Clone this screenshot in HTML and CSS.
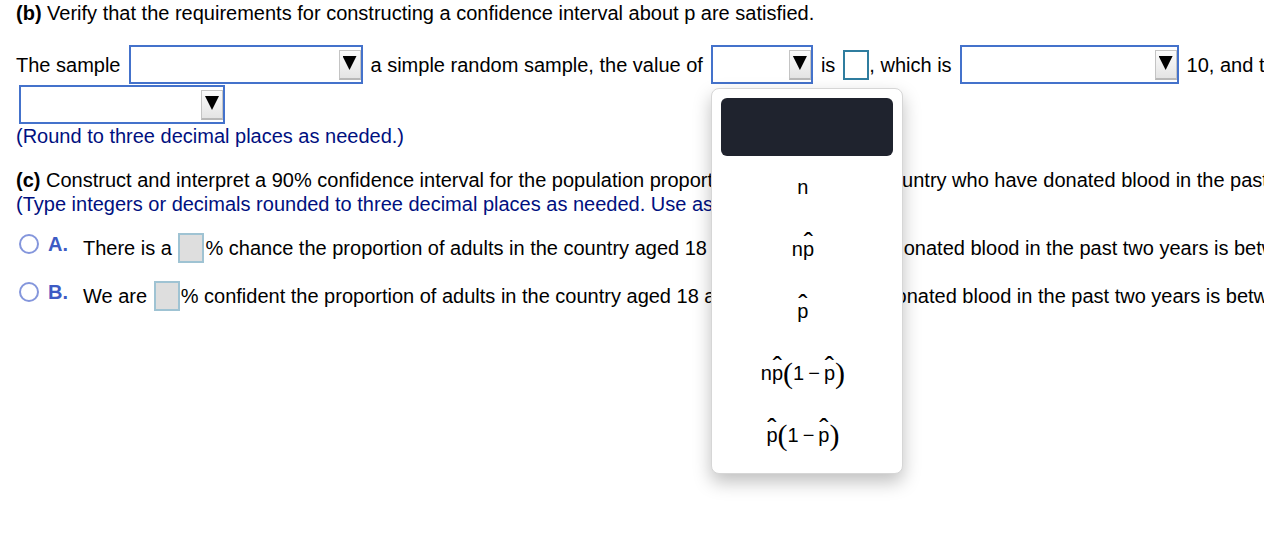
FILE: index.html
```html
<!DOCTYPE html>
<html lang="en">
<head>
    <meta charset="UTF-8">
    <title>Confidence Interval for a Proportion</title>
    <link rel="stylesheet" href="styles.css">
</head>
<body>
    <main class="question">
        <!-- Part (b) -->
        <p class="line"><b>(b)</b> Verify that the requirements for constructing a confidence interval about p are satisfied.</p>

        <div class="answer-rows">
            <div class="row">
                <span>The sample</span>
                <span class="dropdown wide">
                    <select aria-label="The sample"><option></option></select>
                </span>
                <span>a simple random sample, the value of</span>
                <span class="dropdown narrow">
                    <select aria-label="Value of"><option></option></select>
                    <div class="menu" role="listbox" aria-label="Value of">
                        <button class="option selected" role="option" aria-selected="true" aria-label="Blank"></button>
                        <button class="option" role="option">n</button>
                        <button class="option" role="option">n<span class="hat">p</span></button>
                        <button class="option" role="option"><span class="hat">p</span></button>
                        <button class="option" role="option">n<span class="hat">p</span><span class="paren">(</span>1<span class="minus">−</span><span class="hat">p</span><span class="paren">)</span></button>
                        <button class="option" role="option"><span class="hat">p</span><span class="paren">(</span>1<span class="minus">−</span><span class="hat">p</span><span class="paren">)</span></button>
                    </div>
                </span>
                <span>is</span>
                <span class="field"><input class="blank" type="text" aria-label="Computed value">, which is</span>
                <span class="dropdown medium">
                    <select aria-label="Comparison with 10"><option></option></select>
                </span>
                <span>10, and the</span>
            </div>
            <div class="row">
                <span class="dropdown short">
                    <select aria-label="Population size condition"><option></option></select>
                </span>
            </div>
        </div>
        <p class="line hint">(Round to three decimal places as needed.)</p>

        <!-- Part (c) -->
        <div class="part">
            <p class="line"><b>(c)</b> Construct and interpret a 90% confidence interval for the population proportion of adults in the country who have donated blood in the past two years.</p>
            <p class="line hint">(Type integers or decimals rounded to three decimal places as needed. Use ascending order.)</p>
        </div>

        <div class="choices">
            <div class="choice">
                <input type="radio" name="choice" id="choice-a">
                <label for="choice-a">A.</label>
                <span class="field">There is a <input class="blank" type="text" aria-label="Percent chance" disabled>% chance the proportion of adults in the country aged 18 and older who have donated blood in the past two years is between</span>
            </div>
            <div class="choice">
                <input type="radio" name="choice" id="choice-b">
                <label for="choice-b">B.</label>
                <span class="field">We are <input class="blank" type="text" aria-label="Percent confident" disabled>% confident the proportion of adults in the country aged 18 and older who have donated blood in the past two years is between</span>
            </div>
        </div>
    </main>
</body>
</html>
```
FILE: styles.css
```css
*,
*::before,
*::after {
    box-sizing: border-box;
}

body {
    margin: 0;
    background: #fff;
    color: #000;
    font-family: "Liberation Sans", Arial, Helvetica, sans-serif;
    font-size: 20px;
    line-height: 24px;
}

.question {
    min-height: 100vh;
    padding: 1px 0 0 16px;
    overflow: hidden;
    white-space: nowrap;
}

.line {
    margin: 0;
}

.hint {
    color: #00107f;
}

.answer-rows {
    display: flex;
    flex-direction: column;
    gap: 1px;
    margin-top: 20px;
}

.row {
    display: flex;
    align-items: center;
    gap: 8px;
}

/* Dropdowns */
.dropdown {
    position: relative;
    flex: none;
    height: 39px;
}

.dropdown select {
    appearance: none;
    display: block;
    width: 100%;
    height: 100%;
    margin: 0;
    border: 2px solid #4472cb;
    border-radius: 0;
    background: #fff;
    font: inherit;
}

.dropdown::after {
    content: "";
    position: absolute;
    top: 5px;
    right: 2px;
    width: 22px;
    height: 30px;
    border: 1px solid #c4c4c4;
    border-bottom: 2px solid #b8b8b8;
    background: linear-gradient(#fbfbfb, #e4e4e4);
    pointer-events: none;
}

.dropdown::before {
    content: "";
    position: absolute;
    z-index: 1;
    top: 11px;
    right: 6px;
    width: 14px;
    height: 14px;
    background: #000;
    clip-path: polygon(0 0, 100% 0, 50% 100%);
    pointer-events: none;
}

.wide {
    width: 234px;
}

.medium {
    width: 219px;
}

.short {
    width: 206px;
    margin-left: 3px;
}

.narrow {
    width: 102px;
}

/* Open list of expressions */
.menu {
    position: absolute;
    z-index: 2;
    top: 43px;
    left: 0;
    width: 192px;
    padding: 9px 9px 7px;
    border: 1px solid #d6d6d6;
    border-radius: 8px;
    background: #fff;
    box-shadow: 0 8px 18px rgba(0, 0, 0, 0.25);
}

.option {
    display: flex;
    align-items: center;
    justify-content: center;
    width: 100%;
    height: 62px;
    padding: 0 8px 0 0;
    border: 0;
    border-radius: 6px;
    background: none;
    color: #000;
    font: inherit;
}

.option.selected {
    height: 58px;
    background: #1f232e;
}

.hat {
    position: relative;
}

.hat::before {
    content: "ˆ";
    position: absolute;
    top: -6px;
    left: 0;
    width: 100%;
    display: flex;
    justify-content: center;
    font-size: 28px;
}

.paren {
    font-family: "Liberation Serif", "Times New Roman", serif;
    font-size: 30px;
}

.minus {
    margin: 0 4px;
}

/* Answer boxes */
.field {
    display: flex;
    align-items: center;
    white-space: pre;
}

.blank {
    flex: none;
    width: 26px;
    height: 30px;
    padding: 0;
    border: 2px solid #2f7d9f;
    border-radius: 0;
    background: #fff;
    font: inherit;
    text-align: center;
}

.blank:disabled {
    margin: 0 1px;
    border: 2px solid #9fc3d3;
    background: #dedede;
}

/* Part (c) */
.part {
    margin-top: 20px;
}

.choices {
    margin-top: 8px;
}

.choice {
    display: flex;
    align-items: center;
    height: 48px;
}

.choice input[type="radio"] {
    appearance: none;
    flex: none;
    width: 20px;
    height: 20px;
    margin: 0 9px 8px 3px;
    border: 2px solid #8496dc;
    border-radius: 50%;
    background: #fff;
}

.choice input[type="radio"]:checked {
    background: radial-gradient(#3d5bc4 40%, #fff 45%);
}

.choice label {
    flex: none;
    width: 35px;
    margin-bottom: 8px;
    color: #3d5bc4;
    font-weight: bold;
}
```
